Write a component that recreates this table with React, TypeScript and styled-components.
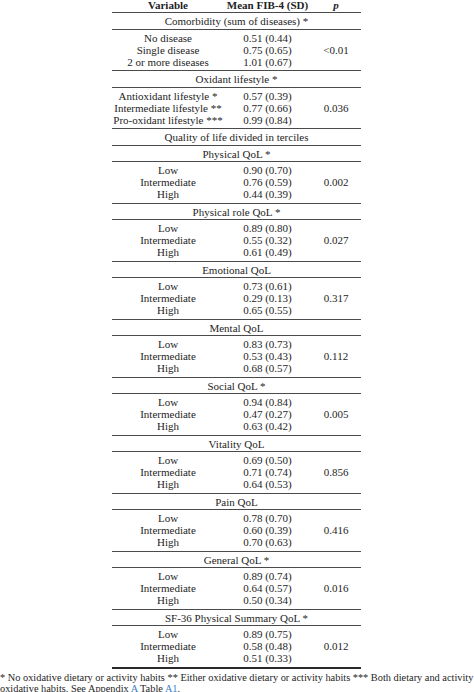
import React from 'react';
import styled, { createGlobalStyle } from 'styled-components';

const GlobalStyle = createGlobalStyle`
  html, body {
    margin: 0;
    padding: 0;
    background: #ffffff;
  }
  body {
    font-family: "Liberation Serif", "Times New Roman", serif;
    color: #1e1e1e;
  }
`;

type Group = {
  title: string;
  rows?: [string, string][];
  p?: string;
};

const groups: Group[] = [
  {
    title: 'Comorbidity (sum of diseases) *',
    rows: [
      ['No disease', '0.51 (0.44)'],
      ['Single disease', '0.75 (0.65)'],
      ['2 or more diseases', '1.01 (0.67)'],
    ],
    p: '<0.01',
  },
  {
    title: 'Oxidant lifestyle *',
    rows: [
      ['Antioxidant lifestyle *', '0.57 (0.39)'],
      ['Intermediate lifestyle **', '0.77 (0.66)'],
      ['Pro-oxidant lifestyle ***', '0.99 (0.84)'],
    ],
    p: '0.036',
  },
  { title: 'Quality of life divided in terciles' },
  {
    title: 'Physical QoL *',
    rows: [
      ['Low', '0.90 (0.70)'],
      ['Intermediate', '0.76 (0.59)'],
      ['High', '0.44 (0.39)'],
    ],
    p: '0.002',
  },
  {
    title: 'Physical role QoL *',
    rows: [
      ['Low', '0.89 (0.80)'],
      ['Intermediate', '0.55 (0.32)'],
      ['High', '0.61 (0.49)'],
    ],
    p: '0.027',
  },
  {
    title: 'Emotional QoL',
    rows: [
      ['Low', '0.73 (0.61)'],
      ['Intermediate', '0.29 (0.13)'],
      ['High', '0.65 (0.55)'],
    ],
    p: '0.317',
  },
  {
    title: 'Mental QoL',
    rows: [
      ['Low', '0.83 (0.73)'],
      ['Intermediate', '0.53 (0.43)'],
      ['High', '0.68 (0.57)'],
    ],
    p: '0.112',
  },
  {
    title: 'Social QoL *',
    rows: [
      ['Low', '0.94 (0.84)'],
      ['Intermediate', '0.47 (0.27)'],
      ['High', '0.63 (0.42)'],
    ],
    p: '0.005',
  },
  {
    title: 'Vitality QoL',
    rows: [
      ['Low', '0.69 (0.50)'],
      ['Intermediate', '0.71 (0.74)'],
      ['High', '0.64 (0.53)'],
    ],
    p: '0.856',
  },
  {
    title: 'Pain QoL',
    rows: [
      ['Low', '0.78 (0.70)'],
      ['Intermediate', '0.60 (0.39)'],
      ['High', '0.70 (0.63)'],
    ],
    p: '0.416',
  },
  {
    title: 'General QoL *',
    rows: [
      ['Low', '0.89 (0.74)'],
      ['Intermediate', '0.64 (0.57)'],
      ['High', '0.50 (0.34)'],
    ],
    p: '0.016',
  },
  {
    title: 'SF-36 Physical Summary QoL *',
    rows: [
      ['Low', '0.89 (0.75)'],
      ['Intermediate', '0.58 (0.48)'],
      ['High', '0.51 (0.33)'],
    ],
    p: '0.012',
  },
];

const Page = styled.div`
  width: 474px;
  height: 692px;
  overflow: hidden;
  font-size: 11px;
`;

const Table = styled.div`
  width: 249px;
  margin-left: 112px;
  border-bottom: 2px solid #2a2a2a;
`;

const HeaderRow = styled.div`
  display: grid;
  grid-template-columns: 112px 87px 50px;
  height: 12px;
  line-height: 11px;
  font-weight: bold;
  border-bottom: 1px solid #4a4a4a;
`;

const HeadCell = styled.div<{ $italic?: boolean }>`
  text-align: center;
  white-space: nowrap;
  font-style: ${(p) => (p.$italic ? 'italic' : 'normal')};
`;

const SectionTitle = styled.div`
  height: 15.5px;
  line-height: 16px;
  text-align: center;
  white-space: nowrap;
  border-bottom: 1px solid #4a4a4a;
`;

const GroupBody = styled.div<{ $last?: boolean }>`
  display: grid;
  grid-template-columns: 112px 87px 50px;
  grid-template-rows: repeat(3, 12px);
  padding: 2px 0 2.5px;
  line-height: 12px;
  border-bottom: ${(p) => (p.$last ? 'none' : '1px solid #4a4a4a')};
`;

const Cell = styled.div`
  text-align: center;
  white-space: nowrap;
`;

const PCell = styled.div`
  grid-column: 3;
  grid-row: 1 / span 3;
  display: flex;
  align-items: center;
  justify-content: center;
`;

const Footnote = styled.div`
  margin-top: 3px;
  font-size: 10.35px;
  line-height: 11px;
  white-space: nowrap;
`;

const Link = styled.span`
  color: #3d7fc1;
`;

export default function App() {
  return (
    <Page>
      <GlobalStyle />
      <Table>
        <HeaderRow>
          <HeadCell>Variable</HeadCell>
          <HeadCell>Mean FIB-4 (SD)</HeadCell>
          <HeadCell $italic>p</HeadCell>
        </HeaderRow>
        {groups.map((g, i) => (
          <React.Fragment key={g.title}>
            <SectionTitle>{g.title}</SectionTitle>
            {g.rows ? (
              <GroupBody $last={i === groups.length - 1}>
                {g.rows.map(([label, mean], r) => (
                  <React.Fragment key={label}>
                    <Cell style={{ gridColumn: 1, gridRow: r + 1 }}>{label}</Cell>
                    <Cell style={{ gridColumn: 2, gridRow: r + 1 }}>{mean}</Cell>
                  </React.Fragment>
                ))}
                <PCell>{g.p}</PCell>
              </GroupBody>
            ) : null}
          </React.Fragment>
        ))}
      </Table>
      <Footnote>
        * No oxidative dietary or activity habits ** Either oxidative dietary or activity habits *** Both dietary and activity
        <br />
        oxidative habits. See Appendix <Link>A</Link> Table <Link>A1</Link>.
      </Footnote>
    </Page>
  );
}
